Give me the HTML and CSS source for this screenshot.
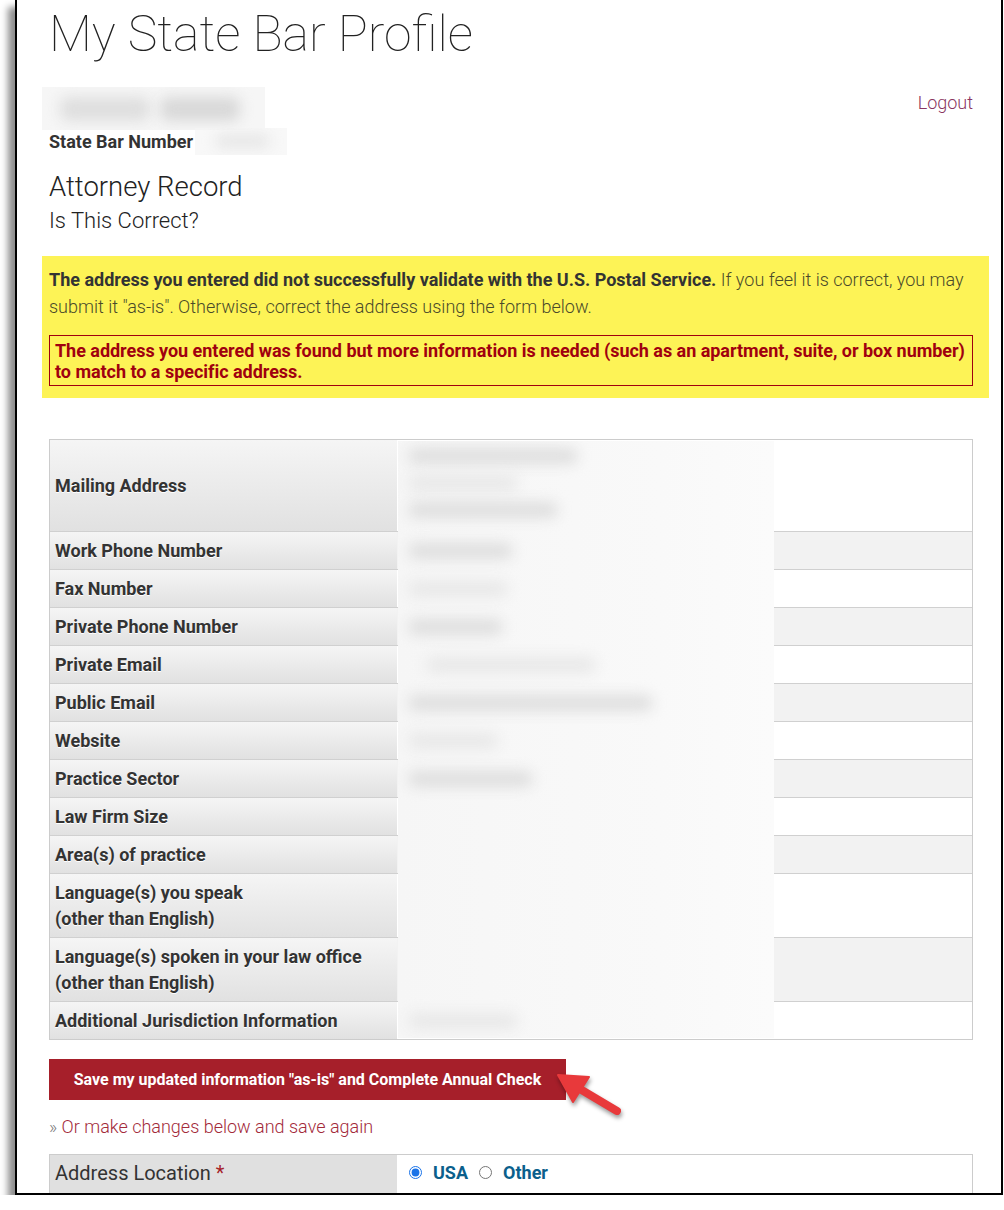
FILE: index.html
```html
<!DOCTYPE html>
<html lang="en">
<head>
<meta charset="utf-8">
<title>My State Bar Profile</title>
<link rel="stylesheet" href="styles.css">
</head>
<body>
<div class="frame">
  <h1 class="title">My State Bar Profile</h1>

  <div class="account">
    <div class="account-left">
      <div class="name-blur"><span class="blob b1"></span><span class="blob b2"></span></div>
      <div class="barno">State Bar Number <span class="barno-blur"><span class="blob b3"></span></span></div>
    </div>
    <a class="logout" href="#">Logout</a>
  </div>

  <h2 class="record">Attorney Record</h2>
  <p class="question">Is This Correct?</p>

  <div class="notice">
    <p class="notice-text"><strong>The address you entered did not successfully validate with the U.S. Postal Service.</strong> If you feel it is correct, you may submit it "as-is". Otherwise, correct the address using the form below.</p>
    <p class="notice-error">The address you entered was found but more information is needed (such as an apartment, suite, or box number) to match to a specific address.</p>
  </div>

  <div class="record-table">
    <div class="row r-mail"><div class="lbl">Mailing Address</div><div class="val"></div></div>
    <div class="row alt"><div class="lbl">Work Phone Number</div><div class="val"></div></div>
    <div class="row"><div class="lbl">Fax Number</div><div class="val"></div></div>
    <div class="row alt"><div class="lbl">Private Phone Number</div><div class="val"></div></div>
    <div class="row"><div class="lbl">Private Email</div><div class="val"></div></div>
    <div class="row alt"><div class="lbl">Public Email</div><div class="val"></div></div>
    <div class="row"><div class="lbl">Website</div><div class="val"></div></div>
    <div class="row alt"><div class="lbl">Practice Sector</div><div class="val"></div></div>
    <div class="row"><div class="lbl">Law Firm Size</div><div class="val"></div></div>
    <div class="row alt"><div class="lbl">Area(s) of practice</div><div class="val"></div></div>
    <div class="row"><div class="lbl">Language(s) you speak<br>(other than English)</div><div class="val"></div></div>
    <div class="row alt"><div class="lbl">Language(s) spoken in your law office<br>(other than English)</div><div class="val"></div></div>
    <div class="row last"><div class="lbl">Additional Jurisdiction Information</div><div class="val"></div></div>

    <div class="redact">
      <div class="rd rd-mail">
        <span class="blob" style="width:170px"></span>
        <span class="blob lite" style="width:110px"></span>
        <span class="blob" style="width:150px"></span>
      </div>
      <div class="rd"><span class="blob" style="width:105px"></span></div>
      <div class="rd"><span class="blob lite" style="width:100px"></span></div>
      <div class="rd"><span class="blob" style="width:95px"></span></div>
      <div class="rd"><span class="blob lite" style="width:170px;margin-left:18px"></span></div>
      <div class="rd"><span class="blob" style="width:245px"></span></div>
      <div class="rd"><span class="blob lite" style="width:90px"></span></div>
      <div class="rd"><span class="blob" style="width:125px"></span></div>
      <div class="rd"></div>
      <div class="rd"></div>
      <div class="rd rd2"></div>
      <div class="rd rd2"></div>
      <div class="rd"><span class="blob lite" style="width:110px"></span></div>
    </div>
  </div>

  <button class="save" type="button">Save my updated information "as-is" and Complete Annual Check</button>

  <p class="again"><span class="raquo">»</span> Or make changes below and save again</p>

  <div class="form-table">
    <div class="frow">
      <div class="flbl">Address Location <span class="req">*</span></div>
      <div class="fval">
        <label class="opt"><input type="radio" name="loc" checked> USA</label>
        <label class="opt"><input type="radio" name="loc"> Other</label>
      </div>
    </div>
  </div>

  <svg class="arrow" width="90" height="62" viewBox="0 0 90 62" aria-hidden="true">
    <line x1="75" y1="51" x2="38" y2="29" stroke="#e8393b" stroke-width="8" stroke-linecap="round"/>
    <polygon points="16,15 47,17 31,42" fill="#e8393b" stroke="#e8393b" stroke-width="2" stroke-linejoin="round"/>
  </svg>
</div>
</body>
</html>
```

FILE: styles.css
```css
* { box-sizing: border-box; }

body {
  margin: 0;
  background: #fff;
  font-family: Roboto, "Noto Sans", "Liberation Sans", sans-serif;
  color: #333;
}

.frame {
  position: relative;
  margin-left: 15px;
  width: 988px;
  height: 1195px;
  border: 2px solid #000;
  border-top: 0;
  box-shadow: -7px 7px 7px rgba(0, 0, 0, 0.45);
  background: #fff;
  overflow: hidden;
  padding: 4px 28px 0 32px;
}

.title {
  margin: 0;
  font-size: 50px;
  line-height: 61px;
  font-weight: 100;
  color: #222;
}

.account {
  display: flex;
  justify-content: space-between;
  align-items: flex-start;
  margin-top: 22px;
}

.name-blur {
  width: 223px;
  height: 43px;
  margin-left: -7px;
  background: #f6f6f6;
  display: flex;
  align-items: center;
  gap: 10px;
  padding-left: 18px;
  overflow: hidden;
}

.blob {
  display: block;
  height: 14px;
  background: #dedede;
  border-radius: 8px;
  filter: blur(7px);
}

.blob.lite { background: #e8e8e8; }

.b1 { width: 90px; height: 24px; background: #dedede; }
.b2 { width: 80px; height: 24px; background: #d8d8d8; }
.b3 { width: 55px; margin: 6px 0 0 20px; height: 14px; background: #e6e6e6; }

.barno {
  font-size: 18px;
  line-height: 27px;
  font-weight: 700;
  color: #333;
  display: flex;
  margin-top: -2px;
}

.barno-blur {
  display: block;
  width: 92px;
  height: 27px;
  margin-left: 2px;
  background: #f8f8f8;
  overflow: hidden;
}

.logout {
  margin-top: 2px;
  font-size: 18px;
  line-height: 27px;
  font-weight: 300;
  color: #8a3560;
  text-decoration: none;
}

.record {
  margin: 16px 0 0;
  font-size: 27.5px;
  line-height: 32px;
  font-weight: 300;
  color: #222;
}

.question {
  margin: 4px 0 0;
  font-size: 22px;
  line-height: 28px;
  font-weight: 300;
  color: #222;
}

.notice {
  margin: 21px -16px 0 -7px;
  background: #fdf356;
  padding: 10px 16px 12px 7px;
}

.notice-text {
  margin: 0;
  font-size: 18px;
  line-height: 27px;
  font-weight: 300;
  color: #4a4a2a;
}

.notice-text strong {
  font-weight: 700;
  color: #333;
}

.notice-error {
  margin: 15px 0 0;
  border: 1px solid #a0000f;
  padding: 4px 0 3px 5px;
  font-size: 18px;
  line-height: 21px;
  font-weight: 700;
  letter-spacing: -0.03px;
  color: #a0000f;
}

.record-table {
  position: relative;
  margin-top: 41px;
  border: 1px solid #ccc;
}

.row {
  display: flex;
  border-bottom: 1px solid #d0d0d0;
  background: #fff;
}

.row.alt { background: #f2f2f2; }
.row.last { border-bottom: 0; }

.lbl {
  width: 347px;
  flex: none;
  padding: 5.5px 5px;
  font-size: 18px;
  line-height: 26px;
  font-weight: 700;
  color: #333;
  text-shadow: 0 1px 0 #fff;
  background: linear-gradient(#f5f5f5, #e1e1e1);
  display: flex;
  align-items: center;
}

.r-mail .lbl,
.r-mail .val { min-height: 91px; }

.val { flex: 1; min-height: 37px; }

.redact {
  position: absolute;
  left: 348px;
  top: 1px;
  width: 376px;
  bottom: 1px;
  background: linear-gradient(90deg, #f6f6f6, #f9f9f9 70%, #fbfbfb);
  display: flex;
  flex-direction: column;
  overflow: hidden;
}

.rd {
  height: 38px;
  flex: none;
  padding: 11px 10px 0;
}

.rd .blob { height: 16px; }

.rd-mail {
  height: 91px;
  display: flex;
  flex-direction: column;
  gap: 11px;
  padding-top: 7px;
}

.rd2 { height: 64px; }

.save {
  display: block;
  margin-top: 19px;
  width: 517px;
  height: 41px;
  border: 0;
  background: #a61f2a;
  color: #fff;
  font-family: Roboto, "Noto Sans", sans-serif;
  font-size: 16px;
  font-weight: 700;
  text-align: center;
  padding: 0;
}

.again {
  margin: 15px 0 0;
  font-size: 18px;
  line-height: 24px;
  font-weight: 300;
  color: #a32a3a;
}

.raquo { color: #777; }

.form-table {
  margin-top: 15px;
  border: 1px solid #ccc;
}

.frow { display: flex; }

.flbl {
  width: 347px;
  flex: none;
  background: #e0e0e0;
  padding: 5px 5px 12px;
  font-size: 20px;
  line-height: 26px;
  color: #333;
}

.req { color: #a61f2a; }

.fval {
  flex: 1;
  padding: 7px 12px;
  display: flex;
  gap: 11px;
  align-items: center;
  align-self: flex-start;
}

.opt {
  display: flex;
  align-items: center;
  gap: 11px;
  font-size: 18px;
  font-weight: 700;
  color: #0b5f8c;
}

.opt input {
  margin: 0;
  width: 13px;
  height: 13px;
  accent-color: #1a73e8;
}

.arrow {
  position: absolute;
  left: 525px;
  top: 1060px;
  filter: drop-shadow(1px 3px 2px rgba(0, 0, 0, 0.4));
}
```
